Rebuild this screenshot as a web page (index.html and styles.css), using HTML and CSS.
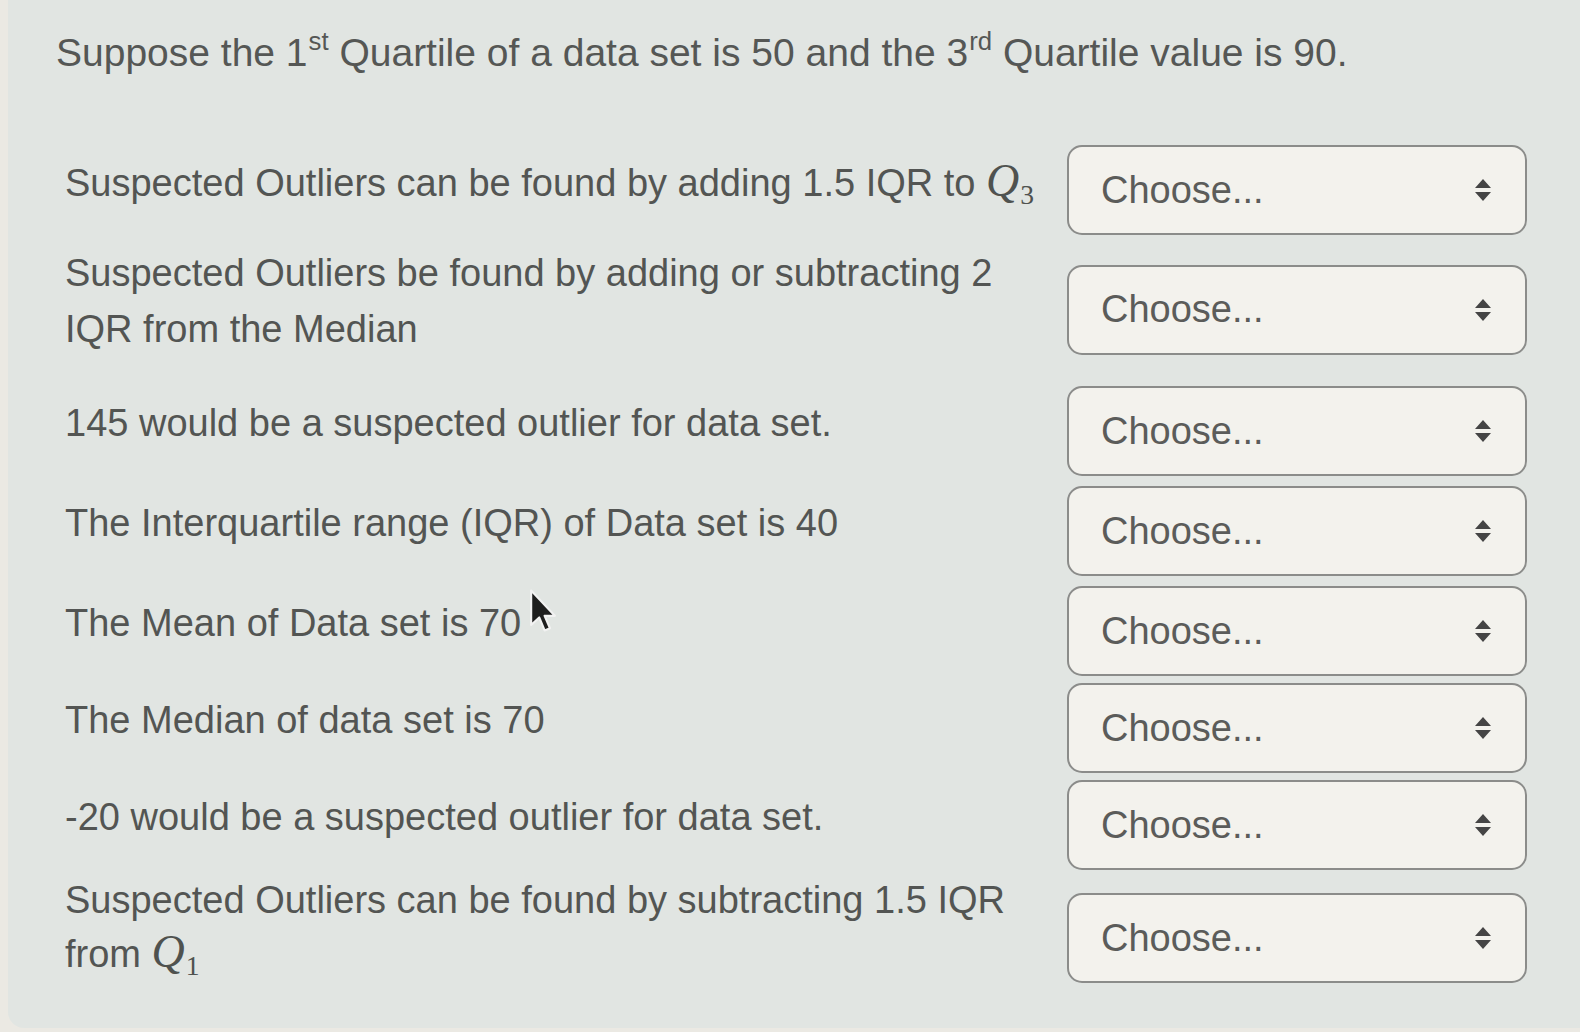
FILE: index.html
```html
<!DOCTYPE html>
<html lang="en">
<head>
<meta charset="utf-8">
<title>Quartile question</title>
<link rel="stylesheet" href="styles.css">
</head>
<body>
<div class="card">
  <p class="title">Suppose the 1<sup class="sup">st</sup> Quartile of a data set is 50 and the 3<sup class="sup">rd</sup> Quartile value is 90.</p>

  <div class="rows">
    <div class="row">
      <div class="label">Suspected Outliers can be found by adding 1.5 IQR to <span class="math"><i>Q</i><sub>3</sub></span></div>
      <div class="select"><span class="choose">Choose...</span><span class="arrows"><svg width="18" height="24" viewBox="0 0 18 24"><path d="M9 1 L17 10 L1 10 Z M1 14 L17 14 L9 23 Z" fill="#454545"/></svg></span></div>
    </div>
    <div class="row">
      <div class="label">Suspected Outliers be found by adding or subtracting 2<br>IQR from the Median</div>
      <div class="select"><span class="choose">Choose...</span><span class="arrows"><svg width="18" height="24" viewBox="0 0 18 24"><path d="M9 1 L17 10 L1 10 Z M1 14 L17 14 L9 23 Z" fill="#454545"/></svg></span></div>
    </div>
    <div class="row row--loose">
      <div class="label">145 would be a suspected outlier for data set.</div>
      <div class="select"><span class="choose">Choose...</span><span class="arrows"><svg width="18" height="24" viewBox="0 0 18 24"><path d="M9 1 L17 10 L1 10 Z M1 14 L17 14 L9 23 Z" fill="#454545"/></svg></span></div>
    </div>
    <div class="row">
      <div class="label">The Interquartile range (IQR) of Data set is 40</div>
      <div class="select"><span class="choose">Choose...</span><span class="arrows"><svg width="18" height="24" viewBox="0 0 18 24"><path d="M9 1 L17 10 L1 10 Z M1 14 L17 14 L9 23 Z" fill="#454545"/></svg></span></div>
    </div>
    <div class="row">
      <div class="label">The Mean of Data set is 70<svg class="cursor" width="28" height="46" viewBox="0 0 26 42"><path d="M2 2 L2 34 L9.5 27 L14.5 39 L19.5 37 L14.5 25.5 L24 25.5 Z" fill="#1e1e1e" stroke="#f2f2f2" stroke-width="2" stroke-linejoin="round"/></svg></div>
      <div class="select"><span class="choose">Choose...</span><span class="arrows"><svg width="18" height="24" viewBox="0 0 18 24"><path d="M9 1 L17 10 L1 10 Z M1 14 L17 14 L9 23 Z" fill="#454545"/></svg></span></div>
    </div>
    <div class="row row--tight">
      <div class="label">The Median of data set is 70</div>
      <div class="select"><span class="choose">Choose...</span><span class="arrows"><svg width="18" height="24" viewBox="0 0 18 24"><path d="M9 1 L17 10 L1 10 Z M1 14 L17 14 L9 23 Z" fill="#454545"/></svg></span></div>
    </div>
    <div class="row row--tight">
      <div class="label">-20 would be a suspected outlier for data set.</div>
      <div class="select"><span class="choose">Choose...</span><span class="arrows"><svg width="18" height="24" viewBox="0 0 18 24"><path d="M9 1 L17 10 L1 10 Z M1 14 L17 14 L9 23 Z" fill="#454545"/></svg></span></div>
    </div>
    <div class="row row--last">
      <div class="label label--compact">Suspected Outliers can be found by subtracting 1.5 IQR<br>from <span class="math"><i>Q</i><sub>1</sub></span></div>
      <div class="select"><span class="choose">Choose...</span><span class="arrows"><svg width="18" height="24" viewBox="0 0 18 24"><path d="M9 1 L17 10 L1 10 Z M1 14 L17 14 L9 23 Z" fill="#454545"/></svg></span></div>
    </div>
  </div>
</div>
</body>
</html>
```

FILE: styles.css
```css
html, body {
  margin: 0;
  padding: 0;
}

body {
  background: #ebe9e3;
  font-family: "Liberation Sans", Arial, sans-serif;
  color: #535553;
  width: 1580px;
  height: 1032px;
  overflow: hidden;
}

.card {
  margin-left: 8px;
  background: #e1e5e2;
  border-bottom-left-radius: 16px;
  padding: 31px 53px 18px 0;
  box-sizing: border-box;
  height: 1028px;
}

.title {
  margin: 0 0 70px 48px;
  font-size: 39px;
  line-height: 44px;
  color: #555755;
}

.sup {
  font-size: 0.66em;
  vertical-align: 0;
  position: relative;
  top: -0.62em;
  line-height: 0;
  margin-left: 1px;
}

.rows {
  display: flex;
  flex-direction: column;
  gap: 10px;
  padding-left: 57px;
}

.row {
  display: grid;
  grid-template-columns: 1fr 460px;
  align-items: center;
  min-height: 90px;
}

.row--loose {
  margin-top: 2px;
}

.row--tight {
  margin-top: -3px;
}

.row--last {
  margin-top: -6px;
}

.label {
  font-size: 38px;
  line-height: 56px;
  padding-bottom: 17px;
}

.label--compact {
  line-height: 52px;
  padding-bottom: 22px;
}

.math {
  font-family: "Liberation Serif", "Times New Roman", serif;
  font-size: 46px;
  color: #4f524f;
}

.math i {
  font-style: italic;
}

.math sub {
  font-size: 0.6em;
  vertical-align: 0;
  position: relative;
  top: 0.3em;
  line-height: 0;
  margin-left: 1px;
}

.cursor {
  vertical-align: -4px;
  margin-left: 8px;
  position: relative;
  top: -6px;
}

.select {
  height: 90px;
  box-sizing: border-box;
  border: 2px solid #8b8c8a;
  border-radius: 15px;
  background: #f3f2ed;
  display: flex;
  align-items: center;
  justify-content: space-between;
  padding: 0 33px 0 32px;
}

.choose {
  font-size: 38px;
  color: #5b5c5a;
}

.arrows {
  display: flex;
  align-items: center;
}
```
